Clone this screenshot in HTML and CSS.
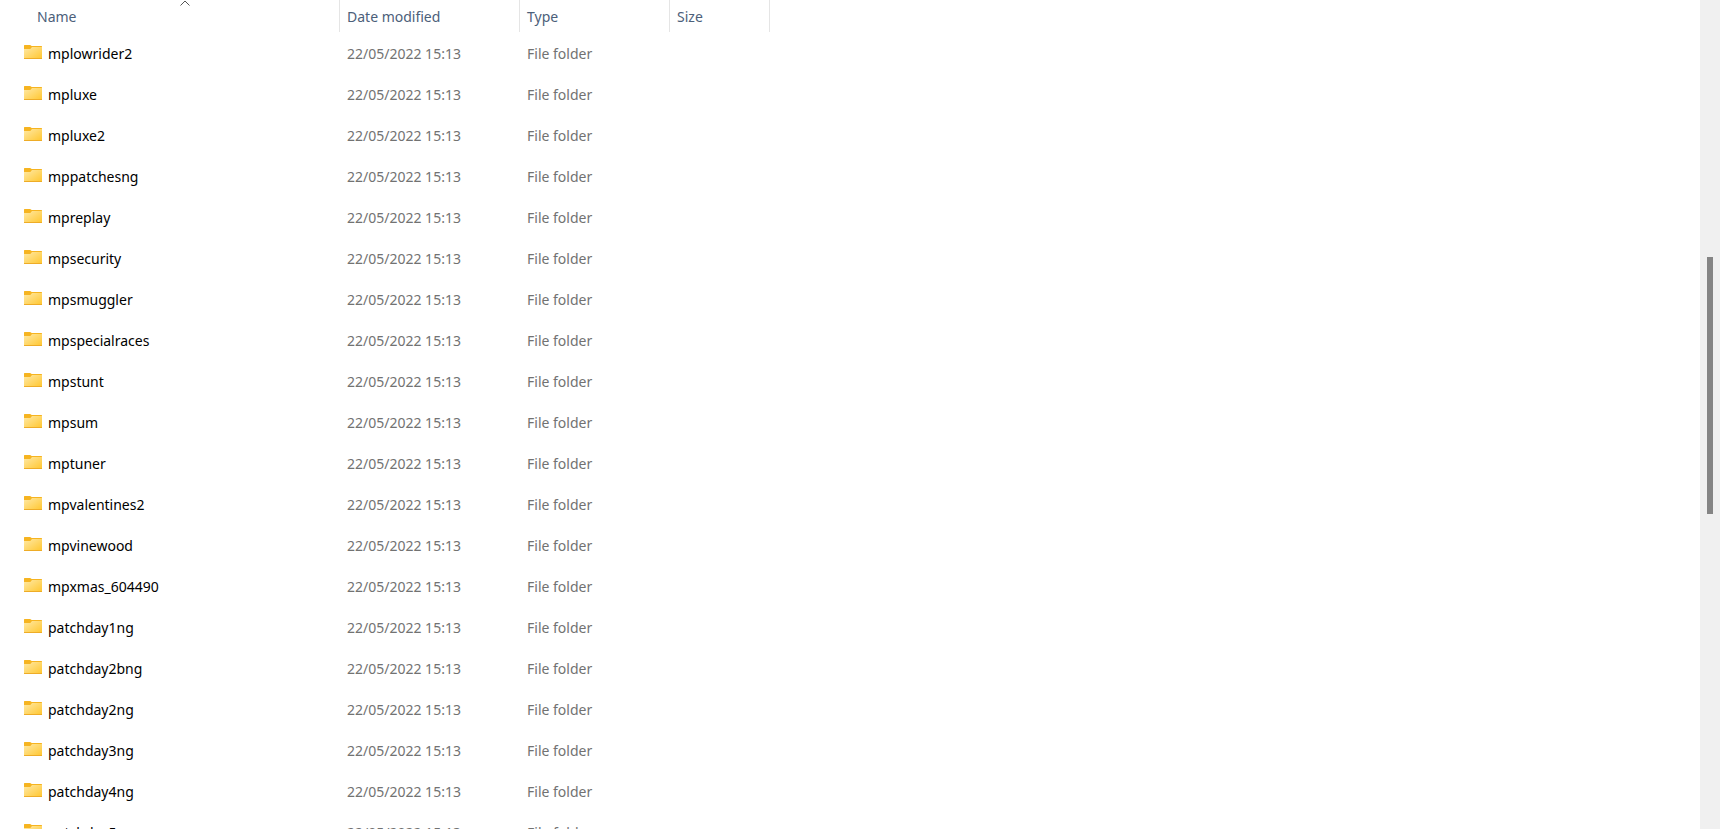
FILE: index.html
```html
<!DOCTYPE html>
<html lang="en">
<head>
    <meta charset="UTF-8">
    <meta name="viewport" content="width=device-width, initial-scale=1.0">
    <title>dlcpacks</title>
    <link rel="stylesheet" href="styles.css">
</head>
<body>
    <!-- Shared folder icon -->
    <svg class="sprite" aria-hidden="true">
        <defs>
            <linearGradient id="folder-front" x1="0" y1="0" x2="1" y2="1">
                <stop offset="0" stop-color="#ffe9a6"/>
                <stop offset="1" stop-color="#ffc62e"/>
            </linearGradient>
        </defs>
        <symbol id="folder" viewBox="0 0 18 14">
            <path d="M0 .6Q0 0 .6 0H6Q6.6 0 7 .5L7.6 1H17.4Q18 1 18 1.6V6H0Z" fill="#f6b420"/>
            <path d="M0 4H6.3L8 2H18V14H0Z" fill="url(#folder-front)"/>
            <path d="M0 13H18V13.4Q18 14 17.4 14H.6Q0 14 0 13.4Z" fill="#eeac27"/>
        </symbol>
    </svg>

    <div class="explorer">
        <main class="file-list">
            <table>
                <thead>
                    <tr>
                        <th class="col-name" aria-sort="ascending">
                            <button type="button">
                                Name
                                <svg class="sort-arrow" viewBox="0 0 10 6" aria-hidden="true"><path d="M.5 5.5L5 1L9.5 5.5"/></svg>
                            </button>
                        </th>
                        <th class="col-date"><button type="button">Date modified</button></th>
                        <th class="col-type"><button type="button">Type</button></th>
                        <th class="col-size"><button type="button">Size</button></th>
                    </tr>
                </thead>
                <tbody id="files"></tbody>
            </table>
        </main>
        <div class="scrollbar">
            <div class="thumb"></div>
        </div>
    </div>

    <script>
        const folders = [
            "mplowrider2", "mpluxe", "mpluxe2", "mppatchesng", "mpreplay",
            "mpsecurity", "mpsmuggler", "mpspecialraces", "mpstunt", "mpsum",
            "mptuner", "mpvalentines2", "mpvinewood", "mpxmas_604490",
            "patchday1ng", "patchday2bng", "patchday2ng", "patchday3ng",
            "patchday4ng", "patchday5ng"
        ];

        document.getElementById("files").innerHTML = folders.map(name => `
            <tr>
                <td class="name"><div><svg class="icon" aria-hidden="true"><use href="#folder"/></svg><span>${name}</span></div></td>
                <td>22/05/2022 15:13</td>
                <td>File folder</td>
                <td></td>
            </tr>`).join("");
    </script>
</body>
</html>
```
FILE: styles.css
```css
* {
    box-sizing: border-box;
}
body {
    margin: 0;
    background-color: #fff;
    font-family: "Noto Sans", "Open Sans", sans-serif;
    font-size: 14px;
    line-height: 20px;
    color: #727272;
}
.sprite {
    position: absolute;
    width: 0;
    height: 0;
}
.explorer {
    display: flex;
    height: 100vh;
    overflow: hidden;
}
.file-list {
    flex: 1;
    overflow: hidden;
}
table {
    width: 770px;
    table-layout: fixed;
    border-collapse: separate;
    border-spacing: 0;
}
.col-name {
    width: 340px;
}
.col-date {
    width: 180px;
}
.col-type {
    width: 150px;
}
.col-size {
    width: 100px;
}
th {
    height: 32px;
    padding: 0;
    border-right: 1px solid #e5e5e5;
}
th button {
    display: block;
    width: 100%;
    height: 32px;
    padding: 2px 7px 0;
    border: none;
    background: none;
    font: inherit;
    font-weight: 400;
    text-align: left;
    color: #4c607a;
}
.col-name {
    padding-left: 30px;
}
.col-name button {
    position: relative;
}
.sort-arrow {
    position: absolute;
    top: 0;
    left: 50%;
    width: 10px;
    height: 6px;
    margin-left: -5px;
    fill: none;
    stroke: #555;
}
td {
    height: 41px;
    padding: 2px 7px 0;
}
td.name {
    padding-left: 24px;
    color: #000;
}
.name div {
    display: flex;
    align-items: center;
    gap: 6px;
}
.icon {
    width: 18px;
    height: 14px;
    margin-bottom: 4px;
}
.scrollbar {
    width: 20px;
    background-color: #f0f0f0;
}
.thumb {
    width: 6px;
    height: 31%;
    margin: 31vh auto 0;
    background-color: #858585;
}
```
